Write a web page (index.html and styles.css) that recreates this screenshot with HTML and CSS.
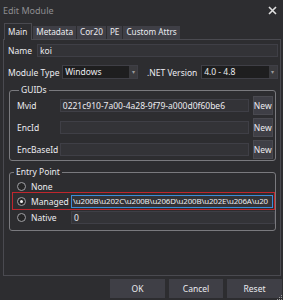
FILE: index.html
```html
<!DOCTYPE html>
<html>
<head>
<meta charset="utf-8">
<link rel="stylesheet" href="styles.css">
</head>
<body>
<div class="window">
  <div class="titlebar">
    <span class="title">Edit Module</span>
    <svg class="close" width="9" height="9" viewBox="0 0 9 9"><path d="M1 1L8 8M8 1L1 8" stroke="#e0e0e0" stroke-width="1.6"/></svg>
  </div>
  <div class="tabs">
    <div class="tab active">Main</div>
    <div class="tab">Metadata</div>
    <div class="tab">Cor20</div>
    <div class="tab">PE</div>
    <div class="tab">Custom Attrs</div>
  </div>
  <div class="panel">
    <div class="row name-row">
      <span class="label">Name</span>
      <div class="input name-input">koi</div>
    </div>
    <div class="row module-row">
      <span class="label">Module Type</span>
      <div class="combo combo-type"><span class="combo-text">Windows</span><span class="combo-btn">&#9662;</span></div>
      <span class="label net-label">.NET Version</span>
      <div class="combo combo-net"><span class="combo-text">4.0 - 4.8</span><span class="combo-btn">&#9662;</span></div>
    </div>
    <fieldset class="group guids">
      <legend>GUIDs</legend>
      <div class="guid-row">
        <span class="glabel">Mvid</span>
        <div class="input guid-input">0221c910-7a00-4a28-9f79-a000d0f60be6</div>
        <div class="newbtn">New</div>
      </div>
      <div class="guid-row">
        <span class="glabel">EncId</span>
        <div class="input guid-input"></div>
        <div class="newbtn">New</div>
      </div>
      <div class="guid-row">
        <span class="glabel">EncBaseId</span>
        <div class="input guid-input"></div>
        <div class="newbtn">New</div>
      </div>
    </fieldset>
    <fieldset class="group entry">
      <legend>Entry Point</legend>
      <div class="ep-row none-row">
        <span class="radio"></span><span class="rlabel">None</span>
      </div>
      <div class="ep-row managed-row">
        <span class="radio checked"></span><span class="rlabel">Managed</span>
        <div class="input ep-input focused">\u200B\u202C\u200B\u206D\u200B\u202E\u206A\u20</div>
      </div>
      <div class="ep-row native-row">
        <span class="radio"></span><span class="rlabel">Native</span>
        <div class="input ep-input">0</div>
      </div>
    </fieldset>
  </div>
  <div class="buttons">
    <div class="btn btn-ok">OK</div>
    <div class="btn btn-cancel">Cancel</div>
    <div class="btn btn-reset">Reset</div>
    <svg class="grip" width="7" height="7" viewBox="0 0 7 7"><g fill="#9a9a9a"><rect x="5" y="0" width="1" height="1"/><rect x="3" y="2" width="1" height="1"/><rect x="5" y="2" width="1" height="1"/><rect x="1" y="4" width="1" height="1"/><rect x="3" y="4" width="1" height="1"/><rect x="5" y="4" width="1" height="1"/><rect x="0" y="6" width="1" height="1"/><rect x="2" y="6" width="1" height="1"/><rect x="4" y="6" width="1" height="1"/><rect x="6" y="6" width="1" height="1"/></g></svg>
  </div>
</div>
</body>
</html>
```
FILE: styles.css
```css
* { box-sizing: border-box; }
html, body { margin: 0; padding: 0; }
body {
  width: 283px;
  height: 300px;
  overflow: hidden;
  background: #2d2d30;
  font-family: "Noto Sans", "Open Sans", sans-serif;
  font-size: 8.5px;
  color: #ececf0;
}
.window { width: 283px; height: 300px; position: relative; }
.titlebar {
  height: 23px;
  display: flex;
  align-items: center;
  justify-content: space-between;
  padding: 0 6px 2px 3px;
}
.title { color: #8e8e92; font-size: 9px; }
.close { display: block; }
.tabs {
  display: flex;
  align-items: flex-end;
  height: 16px;
  padding-left: 4px;
  position: relative;
  z-index: 2;
  font-size: 8.2px;
}
.tab {
  height: 13px;
  line-height: 12px;
  padding: 0 3px;
  margin-right: 1px;
  background: #3f3f46;
  white-space: nowrap;
}
.tab.active {
  height: 17px;
  line-height: 16px;
  margin-bottom: -1px;
  background: #2d2d30;
  border: 1px solid #4a4a50;
  border-bottom: none;
  padding: 0 4px 0 3px;
}
.panel {
  margin: 0 2px 0 3px;
  height: 237px;
  border: 1px solid #4a4a50;
  padding: 0 2px 0 4px;
}
.row { display: flex; align-items: center; }
.label { white-space: nowrap; }
.name-row { margin-top: 4px; height: 13px; }
.name-row .label { width: 29px; }
.input {
  background: #333337;
  border: 1px solid #3f3f46;
  height: 13px;
  line-height: 11px;
  padding: 0 2px;
  white-space: nowrap;
  overflow: hidden;
}
.name-input { flex: 1; }
.module-row { margin-top: 8px; height: 14px; }
.module-row .label { width: 55px; }
.combo {
  display: flex;
  height: 14px;
  background: #1e1e1f;
  border: 1px solid #3f3f46;
}
.combo-type { width: 77px; }
.combo-net { width: 78px; }
.combo-text { flex: 1; line-height: 12px; padding-left: 2px; }
.combo-btn {
  width: 8px;
  background: #3a3a3e;
  color: #9a9a9a;
  font-size: 6px;
  line-height: 12px;
  text-align: center;
}
.net-label { margin-left: 9px; width: 52px; }
.group {
  margin: 5px 2px 0 1px;
  border: 1px solid #7a7a7e;
  border-radius: 3px;
  padding: 0 2px 1px 7px;
  min-width: 0;
}
.group legend {
  padding: 0 2px;
  margin-left: 2px;
  line-height: 12px;
  height: 12px;
}
.guid-row { display: flex; align-items: center; height: 19px; margin-bottom: 3px; }
.guid-row:last-child { margin-bottom: 0; }
.glabel { width: 44px; }
.guid-input { width: 194px; height: 13px; }
.newbtn {
  margin-left: 4px;
  width: 21px;
  height: 19px;
  line-height: 17px;
  background: #3f3f46;
  border: 1px solid #4a4a50;
  text-align: center;
}
.entry { padding: 0 0 6px 2px; }
.ep-row { display: flex; align-items: center; }
.none-row { margin-top: 2px; height: 12px; padding-left: 5px; }
.managed-row {
  height: 18px;
  border: 1px solid #c0262d;
  padding-left: 4px;
  padding-right: 1px;
}
.native-row { margin-top: 1px; height: 13px; padding-left: 5px; }
.radio {
  width: 9px;
  height: 9px;
  border-radius: 50%;
  border: 1px solid #a0a0a4;
  background: #252526;
  flex: none;
  position: relative;
}
.radio.checked::after {
  content: "";
  position: absolute;
  left: 2px; top: 2px;
  width: 3px; height: 3px;
  border-radius: 50%;
  background: #f0f0f0;
}
.rlabel { margin-left: 5px; width: 40px; }
.ep-input { flex: 1; height: 13px; }
.focused {
  border-color: #3d8bd8;
  padding: 0 1px;
  font-size: 7.9px;
  letter-spacing: -0.15px;
}
.buttons {
  display: flex;
  justify-content: flex-end;
  align-items: flex-end;
  margin-top: 3px;
  padding-right: 1px;
  position: relative;
}
.btn {
  height: 19px;
  line-height: 19px;
  background: #3f3f46;
  text-align: center;
  margin-left: 4px;
}
.btn-ok { width: 55px; }
.btn-cancel { width: 54px; }
.btn-reset { width: 55px; }
.grip { position: absolute; right: 0; bottom: -4px; }
```
